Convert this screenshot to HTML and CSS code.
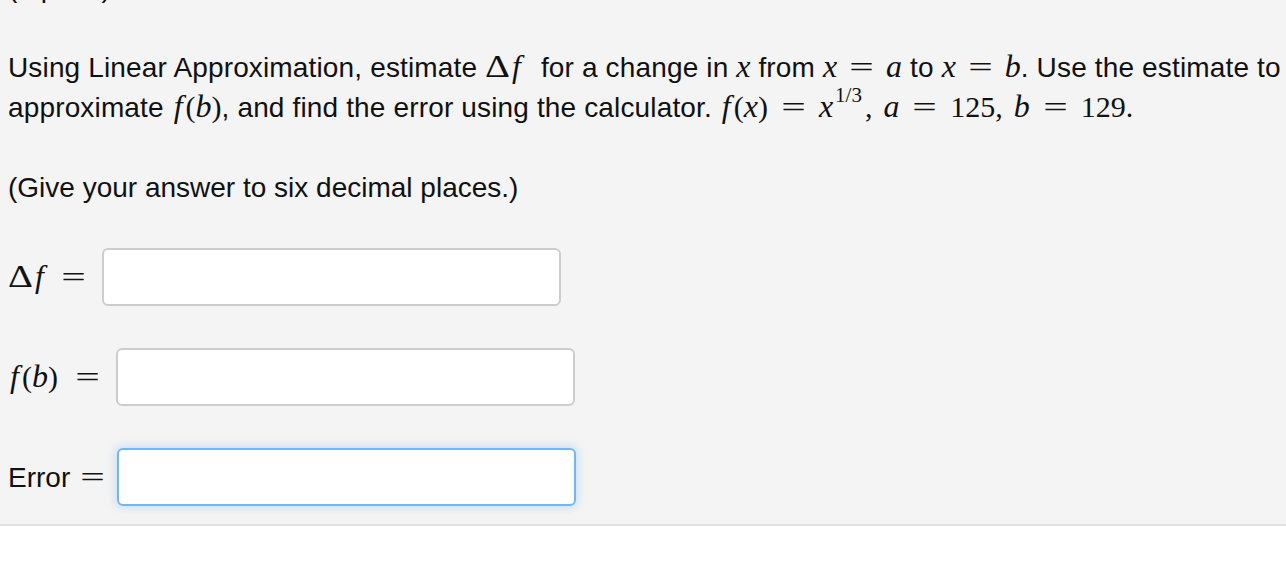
FILE: index.html
```html
<!DOCTYPE html>
<html>
<head>
<meta charset="utf-8">
<link rel="stylesheet" href="styles.css">
</head>
<body>
<div class="panel">
  <p class="points">(1 point)</p>
  <p class="question">Using Linear Approximation, estimate <span class="m df"><span class="up">Δ</span><i class="f">f</i></span> for a change in <span class="m"><i>x</i></span> from <span class="m"><i>x</i><span class="op">=</span><i>a</i></span> to <span class="m"><i>x</i><span class="op">=</span><i>b</i></span>. Use the estimate to approximate <span class="m"><i class="f">f</i>(<i>b</i>)</span>, and find the error using the calculator. <span class="m fx"><i class="f">f</i>(<i>x</i>)<span class="op">=</span><i>x</i><sup>1/3</sup><span class="cm">,</span><i>a</i><span class="op">=</span>125<span class="cm">,</span><i>b</i><span class="op">=</span>129.</span></p>
  <p class="note">(Give your answer to six decimal places.)</p>
  <div class="row">
    <label class="lbl l-df"><span class="m"><span class="up">Δ</span><i class="f">f</i><span class="op">=</span></span></label>
    <input class="box" type="text">
  </div>
  <div class="row">
    <label class="lbl l-fb"><span class="m"><i class="f">f</i>(<i>b</i>)<span class="op">=</span></span></label>
    <input class="box" type="text">
  </div>
  <div class="row">
    <label class="lbl l-err">Error<span class="m"><span class="op">=</span></span></label>
    <input class="box focus" type="text">
  </div>
</div>
</body>
</html>
```
FILE: styles.css
```css
html, body {
  margin: 0;
  padding: 0;
  background: #ffffff;
}
body {
  font-family: "Liberation Sans", Arial, sans-serif;
  font-size: 28px;
  line-height: 39px;
  color: #111111;
}
.panel {
  display: flex;
  flex-direction: column;
  background: #f4f4f4;
  padding: 0 0 18px 8px;
  border-bottom: 2px solid #e1e1e1;
  overflow: hidden;
}
.panel p {
  margin: 0;
}
.points {
  margin-top: -32px !important;
}
.question {
  margin-top: 40px !important;
  margin-right: -14px !important;
  letter-spacing: 0.15px;
}
.note {
  margin-top: 41px !important;
}
.m {
  font-family: "Liberation Serif", "Times New Roman", serif;
  font-size: 30px;
  letter-spacing: 0;
  white-space: nowrap;
}
.m i {
  font-style: italic;
  font-size: 32px;
}
.m i.f {
  padding-left: 2px;
  padding-right: 3px;
}
.m.df {
  margin-right: 9px;
}
.m .up {
  display: inline-block;
  font-style: normal;
  font-size: 31px;
  transform: scaleX(1.25);
  transform-origin: left center;
  margin-right: 5px;
}
.m .op {
  display: inline-block;
  margin: 0 16px;
  transform: scaleX(1.45);
}
.m.fx .op {
  margin: 0 17px;
}
.m .cm {
  margin-right: 11px;
}
.m sup {
  font-size: 21px;
  line-height: 0;
  vertical-align: 15px;
  margin-left: 2px;
  margin-right: 3px;
}
.row {
  display: flex;
  align-items: center;
  gap: 20px;
  margin-top: 41px;
}
.row + .row {
  margin-top: 42px;
}
.lbl {
  white-space: nowrap;
}
.lbl .op {
  margin: 0 0 0 15px;
}
.l-df .op {
  margin-left: 18px;
}
.l-fb .op {
  margin-left: 21px;
}
.l-err .op {
  margin-left: 14px;
  margin-right: -4px;
}
.box {
  box-sizing: border-box;
  width: 459px;
  height: 58px;
  margin: 0;
  border: 2px solid #cdcdcd;
  border-radius: 6px;
  background: #ffffff;
  font-size: 26px;
  padding: 0 10px;
  outline: none;
}
.box.focus {
  border-color: #74b7ee;
  box-shadow: 0 0 8px 2px rgba(116, 183, 238, 0.35);
}
```
